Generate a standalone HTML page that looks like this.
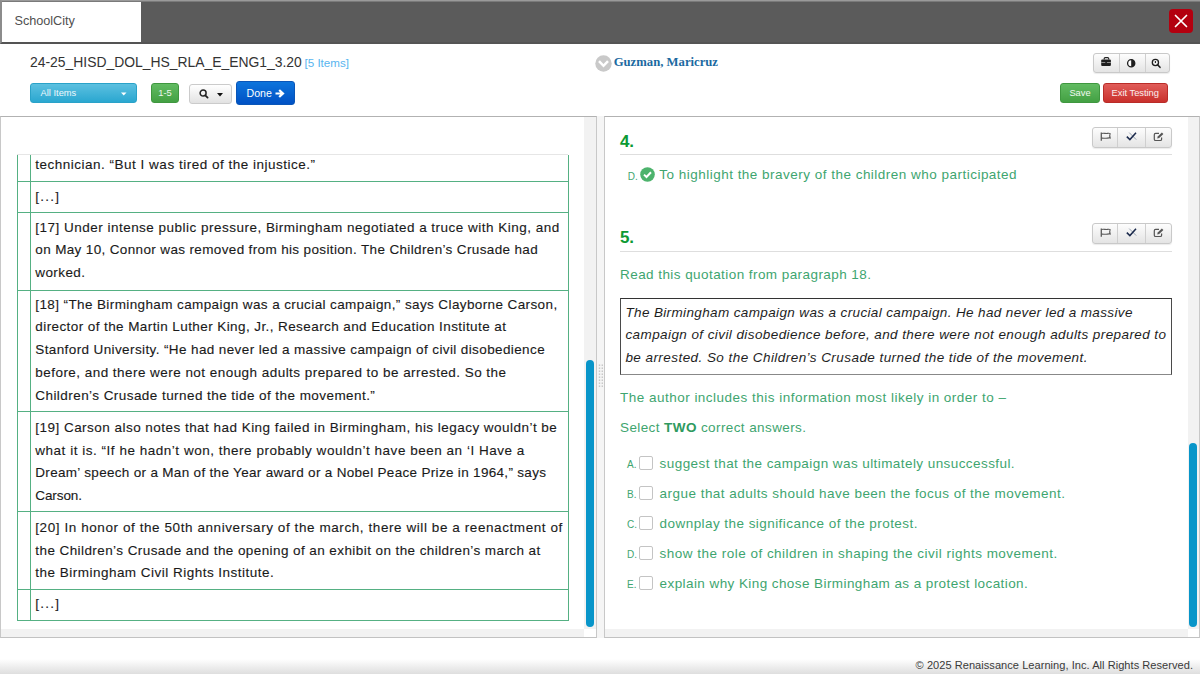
<!DOCTYPE html>
<html><head><meta charset="utf-8">
<style>
*{box-sizing:border-box;margin:0;padding:0}
html,body{width:1200px;height:674px;overflow:hidden;background:#fff;font-family:"Liberation Sans",sans-serif;position:relative}
.a{position:absolute}
.ln{position:absolute;white-space:nowrap;line-height:1;font-family:"Liberation Sans",sans-serif}
.p{color:#1a1a1a;-webkit-text-stroke:0.12px #1a1a1a}
.q{color:#3ea56f}
.q b{font-weight:bold;color:#2f9a60}
.qi{color:#1e1e1e;font-style:italic}
#top{left:0;top:0;width:1200px;height:44px;background:#5b5b5b;border-top:1px solid #9a9a9a;box-shadow:inset 0 1px 0 #7a7a7a;border-left:2px solid #8c8c8c;border-bottom:2px solid #545454}
#tab{left:2px;top:2px;width:139px;height:40px;background:#fff;color:#4a4a4a;font-size:14px}
#close{left:1169px;top:8.5px;width:24px;height:24px;background:#b3000f;border-radius:4px}
.btn{position:absolute;border-radius:3px;color:#fff;font-size:11px;text-align:center;white-space:nowrap}
.grp{position:absolute;border:1px solid #c9c9c9;border-radius:3px;background:linear-gradient(#fdfdfd,#e4e4e4);box-shadow:0 1px 1px rgba(0,0,0,.08)}
.sep{position:absolute;top:0;bottom:0;width:1px;background:#cfcfcf}
.panel{position:absolute;top:116px;height:522px;border:1px solid #c8c8c8;border-top-color:#b2b2b2;border-bottom-color:#c2c2c2;background:#fff}
.track{position:absolute;background:#f2f2f2}
.thumb{position:absolute;background:#0895c9;border-radius:4px}
.gl{position:absolute;background:#55b083}
.rule{position:absolute;height:1px;background:#dedede}
.cb{position:absolute;width:14px;height:13.5px;border:1px solid #c4c4c4;border-radius:2px;background:#fff}
.lt{position:absolute;font-size:10px;color:#3ea56f;line-height:1;white-space:nowrap}
.num{position:absolute;font-size:17px;font-weight:bold;color:#0d9a34;line-height:1}
</style></head><body>
<!-- top bar -->
<div id="top" class="a"></div>
<div id="tab" class="a"><span class="a" style="left:12.6px;top:12.7px;line-height:1;font-size:12.7px;color:#505050;letter-spacing:-0.05px">SchoolCity</span></div>
<div id="close" class="a"><svg width="24" height="24" style="position:absolute;left:0;top:0"><path d="M6.5 6.5 L17.5 17.5 M17.5 6.5 L6.5 17.5" stroke="#fff" stroke-width="1.7" stroke-linecap="round"/></svg></div>

<!-- title row -->
<div class="a" style="left:30px;top:55.8px;font-size:13.9px;color:#333;line-height:1;white-space:nowrap">24-25_HISD_DOL_HS_RLA_E_ENG1_3.20</div><div class="a" style="left:304.5px;top:56.5px;font-size:11.6px;color:#58b5ef;line-height:1;white-space:nowrap">[5 Items]</div>
<svg class="a" style="left:594.5px;top:54.8px" width="17" height="17"><circle cx="8.5" cy="8.5" r="8.2" fill="#c9c9c9"/><path d="M4 6.2 L8.5 10.8 L13 6.2" stroke="#fff" stroke-width="2.5" fill="none"/></svg>
<div class="a" style="left:613.7px;top:55.6px;font-family:'Liberation Serif',serif;font-weight:bold;font-size:12.7px;color:#1b6aa1;line-height:1;white-space:nowrap">Guzman, Maricruz</div>

<!-- tools group -->
<div class="grp" style="left:1093.3px;top:52.8px;width:76.3px;height:20.5px">
  <div class="sep" style="left:24.7px"></div><div class="sep" style="left:50.3px"></div>
  <svg class="a" style="left:-1px;top:-1px" width="78" height="22">
    <path d="M11.2 6.6 V5.6 Q11.2 4.6 12.2 4.6 H14.7 Q15.7 4.6 15.7 5.6 V6.6" fill="none" stroke="#222" stroke-width="1.2"/>
    <rect x="8.2" y="6.4" width="9.7" height="6.6" rx="1" fill="#1e1e1e"/>
    <rect x="8.2" y="9.2" width="9.7" height="0.7" fill="#bdbdbd"/>
    <rect x="12.3" y="8.8" width="1.6" height="1.6" fill="#1e1e1e"/>
    <circle cx="38.2" cy="10.2" r="3.6" fill="#fff" stroke="#1e1e1e" stroke-width="1.3"/>
    <path d="M38.2 6.6 A3.6 3.6 0 0 1 38.2 13.8 Z" fill="#1e1e1e"/>
    <circle cx="62.4" cy="9.5" r="3.1" fill="none" stroke="#1e1e1e" stroke-width="1.3"/>
    <path d="M64.6 11.8 L67 14.3" stroke="#1e1e1e" stroke-width="1.6" stroke-linecap="round"/>
    <path d="M62.4 7.9 V10.1" stroke="#1e1e1e" stroke-width="1.1"/>
  </svg>
</div>

<!-- buttons row -->
<div class="btn" style="left:30px;top:83px;width:107px;height:20.3px;background:linear-gradient(#5cc0e0,#2aa7d0);border:1px solid #2aa2c8;text-align:left">
  <span class="a" style="left:9.6px;top:4.5px;line-height:1;color:#eef8fc;font-size:9.3px">All Items</span>
  <svg class="a" style="left:90.3px;top:8px" width="6" height="4"><path d="M0 0.5 L5.5 0.5 L2.75 3.5 Z" fill="#fff"/></svg>
</div>
<div class="btn" style="left:151px;top:83px;width:28px;height:20.3px;background:linear-gradient(#62bb62,#43a043);border:1px solid #3f973f"><span class="a" style="left:0;width:26px;top:4.5px;line-height:1;color:#eef7ee;font-size:9.3px">1-5</span></div>
<div class="btn" style="left:189.3px;top:83.5px;width:43px;height:20px;background:linear-gradient(#ffffff,#e2e2e2);border:1px solid #cbcbcb">
  <svg class="a" style="left:8.7px;top:4.5px" width="11" height="11"><circle cx="4.1" cy="4.1" r="3" fill="none" stroke="#222" stroke-width="1.5"/><path d="M6.3 6.3 L8.6 8.6" stroke="#222" stroke-width="1.8" stroke-linecap="round"/></svg>
  <svg class="a" style="left:26.5px;top:8.5px" width="6" height="4"><path d="M0 0 L6 0 L3 3.5 Z" fill="#111"/></svg>
</div>
<div class="btn" style="left:235.5px;top:81.3px;width:59.3px;height:23.7px;background:linear-gradient(#0d74dc,#0051c4);border:1px solid #0a56b8;font-size:13px">
  <span class="a" style="left:10px;top:5.5px;line-height:1;color:#fff;font-size:10.6px">Done</span>
  <svg class="a" style="left:38.8px;top:7px" width="11" height="9"><path d="M0.5 4.5 H7.5 M4.2 1 L8 4.5 L4.2 8" stroke="#fff" stroke-width="2.2" fill="none" stroke-linejoin="miter"/></svg>
</div>
<div class="btn" style="left:1060.2px;top:83.2px;width:39.6px;height:20.1px;background:linear-gradient(#62bb62,#43a043);border:1px solid #3f973f"><span class="a" style="left:0;width:37.6px;top:4.5px;line-height:1;color:#f2f9f2;font-size:9.3px">Save</span></div>
<div class="btn" style="left:1102.6px;top:83px;width:65.4px;height:20.3px;background:linear-gradient(#e05d59,#c9302c);border:1px solid #b92c28"><span class="a" style="left:0;width:63.4px;top:4.5px;line-height:1;color:#fbeeee;font-size:9.3px">Exit Testing</span></div>

<!-- panels -->
<div class="panel" style="left:0;width:597px"></div>
<div class="a" style="left:597px;top:116px;width:6.5px;height:522px;background:#f5f5f5"></div>
<svg class="a" style="left:597.5px;top:364px" width="6" height="26">
  <g fill="#c4c4c4">
  <rect x="0.8" y="0.5" width="1.4" height="1.4"/><rect x="3.6" y="0.5" width="1.4" height="1.4"/>
  <rect x="0.8" y="3.5" width="1.4" height="1.4"/><rect x="3.6" y="3.5" width="1.4" height="1.4"/>
  <rect x="0.8" y="6.5" width="1.4" height="1.4"/><rect x="3.6" y="6.5" width="1.4" height="1.4"/>
  <rect x="0.8" y="9.5" width="1.4" height="1.4"/><rect x="3.6" y="9.5" width="1.4" height="1.4"/>
  <rect x="0.8" y="12.5" width="1.4" height="1.4"/><rect x="3.6" y="12.5" width="1.4" height="1.4"/>
  <rect x="0.8" y="15.5" width="1.4" height="1.4"/><rect x="3.6" y="15.5" width="1.4" height="1.4"/>
  <rect x="0.8" y="18.5" width="1.4" height="1.4"/><rect x="3.6" y="18.5" width="1.4" height="1.4"/>
  <rect x="0.8" y="21.5" width="1.4" height="1.4"/><rect x="3.6" y="21.5" width="1.4" height="1.4"/>
  </g>
</svg>
<div class="panel" style="left:603.5px;width:596.5px"></div>

<!-- left scroll -->
<div class="track" style="left:584px;top:117px;width:11.5px;height:512px"></div>
<div class="thumb" style="left:586px;top:360.4px;width:8px;height:267px"></div>
<div class="track" style="left:1px;top:629.4px;width:583px;height:7.2px"></div>

<!-- right scroll -->
<div class="track" style="left:1188px;top:117px;width:11px;height:512px"></div>
<div class="thumb" style="left:1189px;top:442.8px;width:8.4px;height:184px"></div>
<div class="track" style="left:604.5px;top:629.4px;width:583.5px;height:7.2px"></div>

<!-- passage table -->
<div class="a" style="left:17px;top:154.4px;width:551px;height:1px;background:#e6e6e6"></div>
<div class="gl" style="left:17px;top:155px;width:1px;height:466px"></div>
<div class="gl" style="left:30px;top:155px;width:1px;height:466px"></div>
<div class="gl" style="left:567.5px;top:155px;width:1px;height:466px"></div>
<div class="gl" style="left:17px;top:180.7px;width:551px;height:1px"></div>
<div class="gl" style="left:17px;top:211.6px;width:551px;height:1px"></div>
<div class="gl" style="left:17px;top:290.1px;width:551px;height:1px"></div>
<div class="gl" style="left:17px;top:411.4px;width:551px;height:1px"></div>
<div class="gl" style="left:17px;top:511.4px;width:551px;height:1px"></div>
<div class="gl" style="left:17px;top:588.8px;width:551px;height:1px"></div>
<div class="gl" style="left:17px;top:620.2px;width:551px;height:1px"></div>

<!-- right panel content -->
<div class="num" style="left:619.9px;top:133.0px">4.</div>
<div class="rule" style="left:620px;top:154.1px;width:552px"></div>
<div class="num" style="left:619.9px;top:229.1px">5.</div>
<div class="rule" style="left:620px;top:251px;width:552px"></div>
<div class="lt" style="left:627.7px;top:171.6px">D.</div>
<svg class="a" style="left:639.6px;top:167.4px" width="15" height="15"><circle cx="7.5" cy="7.5" r="7.3" fill="#4db36c"/><path d="M4 7.6 L6.5 10 L11 5.3" stroke="#fff" stroke-width="2" fill="none"/></svg>

<div class="a" style="left:620px;top:297.5px;width:552px;height:77.5px;border:1px solid #4a4a4a;border-top:1.5px solid #333;border-bottom-color:#888"></div>

<div id="qg4" class="grp" style="left:1091.5px;top:127.3px;width:80px;height:20.4px">
  <div class="sep" style="left:24.2px"></div><div class="sep" style="left:52.2px"></div>
  <svg class="a" style="left:-1px;top:-1px" width="81" height="21">
    <path d="M9.3 5.6 V13.8" stroke="#5a5a5a" stroke-width="1.3"/>
    <path d="M9.3 6.6 C11.5 5.6 13.5 6.9 15.5 6.4 C16.6 6.2 17.4 6.1 18.2 6.6 C17.6 7.8 17.6 9.4 18.2 11 C16.4 10.6 14.2 11.6 12 11.2 C11 11.1 10.2 11 9.3 11.2" fill="none" stroke="#5a5a5a" stroke-width="1.1"/>
    <path d="M37.2 5.6 L44.2 12.6" stroke="#8d9aa8" stroke-width="0.9"/>
    <path d="M34.8 9.6 L37.9 12.6 L44 5.8" stroke="#1b2a4c" stroke-width="1.5" fill="none"/>
    <path d="M67 6.4 H63.6 Q62.3 6.4 62.3 7.7 V12.2 Q62.3 13.5 63.6 13.5 H68.3 Q69.6 13.5 69.6 12.2 V10.4" fill="none" stroke="#555" stroke-width="1.2"/>
    <path d="M65.2 11.6 L65.7 9.6 L69.9 5.4 L71.4 6.9 L67.2 11.1 Z" fill="#555"/>
  </svg>
</div>
<div class="grp" style="left:1091.5px;top:223.3px;width:80px;height:20.4px">
  <div class="sep" style="left:24.2px"></div><div class="sep" style="left:52.2px"></div>
  <svg class="a" style="left:-1px;top:-1px" width="81" height="21">
    <path d="M9.3 5.6 V13.8" stroke="#5a5a5a" stroke-width="1.3"/>
    <path d="M9.3 6.6 C11.5 5.6 13.5 6.9 15.5 6.4 C16.6 6.2 17.4 6.1 18.2 6.6 C17.6 7.8 17.6 9.4 18.2 11 C16.4 10.6 14.2 11.6 12 11.2 C11 11.1 10.2 11 9.3 11.2" fill="none" stroke="#5a5a5a" stroke-width="1.1"/>
    <path d="M37.2 5.6 L44.2 12.6" stroke="#8d9aa8" stroke-width="0.9"/>
    <path d="M34.8 9.6 L37.9 12.6 L44 5.8" stroke="#1b2a4c" stroke-width="1.5" fill="none"/>
    <path d="M67 6.4 H63.6 Q62.3 6.4 62.3 7.7 V12.2 Q62.3 13.5 63.6 13.5 H68.3 Q69.6 13.5 69.6 12.2 V10.4" fill="none" stroke="#555" stroke-width="1.2"/>
    <path d="M65.2 11.6 L65.7 9.6 L69.9 5.4 L71.4 6.9 L67.2 11.1 Z" fill="#555"/>
  </svg>
</div>

<div class="lt" style="left:627px;top:459.9px">A.</div>
<div class="lt" style="left:627px;top:489.9px">B.</div>
<div class="lt" style="left:627px;top:519.9px">C.</div>
<div class="lt" style="left:627px;top:549.9px">D.</div>
<div class="lt" style="left:627px;top:579.9px">E.</div>
<div class="cb" style="left:639.4px;top:456.2px"></div>
<div class="cb" style="left:639.4px;top:486.1px"></div>
<div class="cb" style="left:639.4px;top:516.1px"></div>
<div class="cb" style="left:639.4px;top:546.1px"></div>
<div class="cb" style="left:639.4px;top:576.1px"></div>

<div id="p0" class="ln p" style="left:35.30px;top:158.07px;font-size:13.50px;letter-spacing:0.501px">technician. “But I was tired of the injustice.”</div>
<div id="p1" class="ln p" style="left:35.30px;top:190.07px;font-size:13.50px;letter-spacing:1.259px">[...]</div>
<div id="p17_0" class="ln p" style="left:35.30px;top:220.67px;font-size:13.50px;letter-spacing:0.485px">[17] Under intense public pressure, Birmingham negotiated a truce with King, and</div>
<div id="p17_1" class="ln p" style="left:35.30px;top:243.37px;font-size:13.50px;letter-spacing:0.357px">on May 10, Connor was removed from his position. The Children’s Crusade had</div>
<div id="p17_2" class="ln p" style="left:35.30px;top:266.07px;font-size:13.50px;letter-spacing:0.403px">worked.</div>
<div id="p18_0" class="ln p" style="left:35.30px;top:297.77px;font-size:13.50px;letter-spacing:0.390px">[18] “The Birmingham campaign was a crucial campaign,” says Clayborne Carson,</div>
<div id="p18_1" class="ln p" style="left:35.30px;top:320.47px;font-size:13.50px;letter-spacing:0.412px">director of the Martin Luther King, Jr., Research and Education Institute at</div>
<div id="p18_2" class="ln p" style="left:35.30px;top:343.17px;font-size:13.50px;letter-spacing:0.386px">Stanford University. “He had never led a massive campaign of civil disobedience</div>
<div id="p18_3" class="ln p" style="left:35.30px;top:365.87px;font-size:13.50px;letter-spacing:0.457px">before, and there were not enough adults prepared to be arrested. So the</div>
<div id="p18_4" class="ln p" style="left:35.30px;top:388.57px;font-size:13.50px;letter-spacing:0.439px">Children’s Crusade turned the tide of the movement.”</div>
<div id="p19_0" class="ln p" style="left:35.30px;top:420.87px;font-size:13.50px;letter-spacing:0.469px">[19] Carson also notes that had King failed in Birmingham, his legacy wouldn’t be</div>
<div id="p19_1" class="ln p" style="left:35.30px;top:443.57px;font-size:13.50px;letter-spacing:0.520px">what it is. “If he hadn’t won, there probably wouldn’t have been an ‘I Have a</div>
<div id="p19_2" class="ln p" style="left:35.30px;top:466.27px;font-size:13.50px;letter-spacing:0.314px">Dream’ speech or a Man of the Year award or a Nobel Peace Prize in 1964,” says</div>
<div id="p19_3" class="ln p" style="left:35.30px;top:488.97px;font-size:13.50px;letter-spacing:-0.097px">Carson.</div>
<div id="p20_0" class="ln p" style="left:35.30px;top:520.87px;font-size:13.50px;letter-spacing:0.577px">[20] In honor of the 50th anniversary of the march, there will be a reenactment of</div>
<div id="p20_1" class="ln p" style="left:35.30px;top:543.57px;font-size:13.50px;letter-spacing:0.419px">the Children’s Crusade and the opening of an exhibit on the children’s march at</div>
<div id="p20_2" class="ln p" style="left:35.30px;top:566.27px;font-size:13.50px;letter-spacing:0.483px">the Birmingham Civil Rights Institute.</div>
<div id="p21" class="ln p" style="left:35.30px;top:597.07px;font-size:13.50px;letter-spacing:1.259px">[...]</div>
<div id="q4d" class="ln q" style="left:659.30px;top:167.87px;font-size:13.50px;letter-spacing:0.484px">To highlight the bravery of the children who participated</div>
<div id="q5a" class="ln q" style="left:620.00px;top:267.97px;font-size:13.50px;letter-spacing:0.435px">Read this quotation from paragraph 18.</div>
<div id="qq0" class="ln qi" style="left:625.40px;top:305.77px;font-size:13.50px;letter-spacing:0.368px">The Birmingham campaign was a crucial campaign. He had never led a massive</div>
<div id="qq1" class="ln qi" style="left:625.40px;top:328.47px;font-size:13.50px;letter-spacing:0.415px">campaign of civil disobedience before, and there were not enough adults prepared to</div>
<div id="qq2" class="ln qi" style="left:625.40px;top:351.17px;font-size:13.50px;letter-spacing:0.441px">be arrested. So the Children’s Crusade turned the tide of the movement.</div>
<div id="q5b" class="ln q" style="left:620.00px;top:390.97px;font-size:13.50px;letter-spacing:0.485px">The author includes this information most likely in order to –</div>
<div id="q5c" class="ln q" style="left:620.00px;top:420.77px;font-size:13.50px;letter-spacing:0.401px">Select <b>TWO</b> correct answers.</div>
<div id="o0" class="ln q" style="left:659.60px;top:456.77px;font-size:13.50px;letter-spacing:0.426px">suggest that the campaign was ultimately unsuccessful.</div>
<div id="o1" class="ln q" style="left:659.60px;top:486.77px;font-size:13.50px;letter-spacing:0.465px">argue that adults should have been the focus of the movement.</div>
<div id="o2" class="ln q" style="left:659.60px;top:516.77px;font-size:13.50px;letter-spacing:0.442px">downplay the significance of the protest.</div>
<div id="o3" class="ln q" style="left:659.60px;top:546.77px;font-size:13.50px;letter-spacing:0.484px">show the role of children in shaping the civil rights movement.</div>
<div id="o4" class="ln q" style="left:659.60px;top:576.77px;font-size:13.50px;letter-spacing:0.418px">explain why King chose Birmingham as a protest location.</div>

<!-- footer -->
<div class="a" style="left:0;top:659px;width:1200px;height:15px;background:linear-gradient(#ffffff,#dedede)"></div>
<div class="a" style="left:915.6px;top:659.7px;font-size:11.05px;letter-spacing:0.04px;color:#3a3a3a;line-height:1;white-space:nowrap">© 2025 Renaissance Learning, Inc. All Rights Reserved.</div>
</body></html>
